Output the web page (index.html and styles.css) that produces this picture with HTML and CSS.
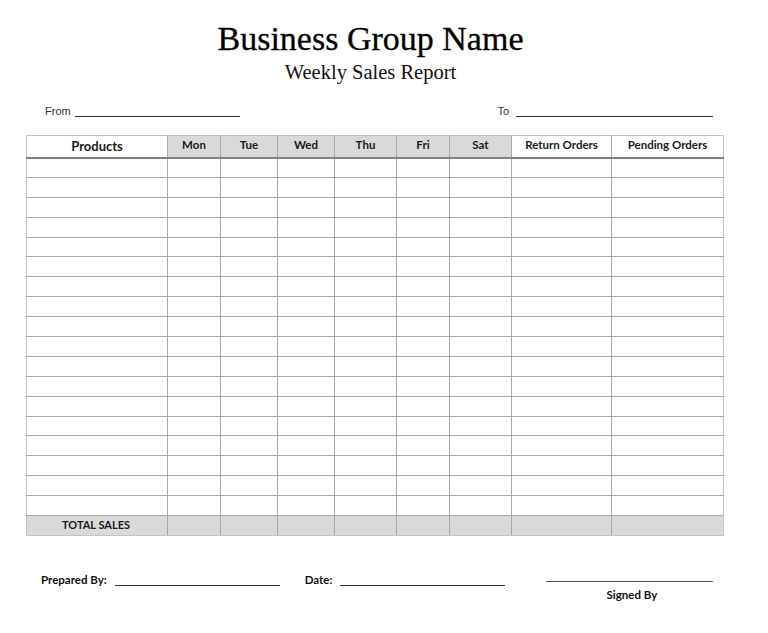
FILE: index.html
```html
<!DOCTYPE html>
<html lang="en">
<head>
<meta charset="utf-8">
<title>Weekly Sales Report</title>
<link rel="stylesheet" href="styles.css">
</head>
<body>
<div class="page">
  <header class="head">
    <h1 class="title">Business Group Name</h1>
    <p class="subtitle">Weekly Sales Report</p>
  </header>
  <div class="range">
    <div class="field"><span class="label">From</span><span class="blank blank-from"></span></div>
    <div class="field"><span class="label label-to">To</span><span class="blank blank-to"></span></div>
  </div>
  <table class="sheet">
    <colgroup>
      <col class="c-prod"><col class="c-mon"><col class="c-tue"><col class="c-wed"><col class="c-thu"><col class="c-fri"><col class="c-sat"><col class="c-ret"><col class="c-pend">
    </colgroup>
    <thead>
      <tr>
        <th class="h-prod">Products</th>
        <th class="h-day">Mon</th>
        <th class="h-day">Tue</th>
        <th class="h-day">Wed</th>
        <th class="h-day">Thu</th>
        <th class="h-day">Fri</th>
        <th class="h-day">Sat</th>
        <th>Return Orders</th>
        <th>Pending Orders</th>
      </tr>
    </thead>
    <tbody>
      <tr><td></td><td></td><td></td><td></td><td></td><td></td><td></td><td></td><td></td></tr>
      <tr><td></td><td></td><td></td><td></td><td></td><td></td><td></td><td></td><td></td></tr>
      <tr><td></td><td></td><td></td><td></td><td></td><td></td><td></td><td></td><td></td></tr>
      <tr><td></td><td></td><td></td><td></td><td></td><td></td><td></td><td></td><td></td></tr>
      <tr><td></td><td></td><td></td><td></td><td></td><td></td><td></td><td></td><td></td></tr>
      <tr><td></td><td></td><td></td><td></td><td></td><td></td><td></td><td></td><td></td></tr>
      <tr><td></td><td></td><td></td><td></td><td></td><td></td><td></td><td></td><td></td></tr>
      <tr><td></td><td></td><td></td><td></td><td></td><td></td><td></td><td></td><td></td></tr>
      <tr><td></td><td></td><td></td><td></td><td></td><td></td><td></td><td></td><td></td></tr>
      <tr><td></td><td></td><td></td><td></td><td></td><td></td><td></td><td></td><td></td></tr>
      <tr><td></td><td></td><td></td><td></td><td></td><td></td><td></td><td></td><td></td></tr>
      <tr><td></td><td></td><td></td><td></td><td></td><td></td><td></td><td></td><td></td></tr>
      <tr><td></td><td></td><td></td><td></td><td></td><td></td><td></td><td></td><td></td></tr>
      <tr><td></td><td></td><td></td><td></td><td></td><td></td><td></td><td></td><td></td></tr>
      <tr><td></td><td></td><td></td><td></td><td></td><td></td><td></td><td></td><td></td></tr>
      <tr><td></td><td></td><td></td><td></td><td></td><td></td><td></td><td></td><td></td></tr>
      <tr><td></td><td></td><td></td><td></td><td></td><td></td><td></td><td></td><td></td></tr>
      <tr><td></td><td></td><td></td><td></td><td></td><td></td><td></td><td></td><td></td></tr>
    </tbody>
    <tfoot>
      <tr class="total"><th>TOTAL SALES</th><td></td><td></td><td></td><td></td><td></td><td></td><td></td><td></td></tr>
    </tfoot>
  </table>
  <footer class="sign">
    <div class="field"><span class="label-b">Prepared By:</span><span class="blank blank-prep"></span></div>
    <div class="field"><span class="label-b">Date:</span><span class="blank blank-date"></span></div>
    <div class="signed"><span class="sig-line"></span><span class="label-b">Signed By</span></div>
  </footer>
</div>
</body>
</html>
```

FILE: styles.css
```css
* { box-sizing: border-box; }
html, body { margin: 0; padding: 0; background: #fff; }
body {
  width: 768px;
  height: 633px;
  font-family: "Lato", "Open Sans", sans-serif;
  color: #1a1a1a;
}
.page {
  padding: 18px 45px 0 26px;
}
.head {
  text-align: center;
  padding-right: 8px;
}
.title {
  margin: 0;
  font-family: "Liberation Serif", "DejaVu Serif", serif;
  font-weight: normal;
  font-size: 34px;
  line-height: 42px;
  color: #000;
  -webkit-text-stroke: 0.3px #000;
}
.subtitle {
  margin: 0;
  font-family: "Liberation Serif", "DejaVu Serif", serif;
  font-size: 20.5px;
  line-height: 24px;
  color: #111;
}
.range {
  display: flex;
  justify-content: space-between;
  align-items: flex-start;
  padding: 21px 10px 0 19px;
  height: 51px;
}
.field {
  display: flex;
  align-items: flex-end;
}
.label {
  font-family: "Liberation Sans", "Arial", sans-serif;
  font-size: 11px;
  line-height: 13px;
  margin-right: 4px;
  color: #333;
}
.label-to { margin-right: 7px; }
.blank {
  display: block;
  border-bottom: 1px solid #333;
  height: 1px;
  margin-bottom: 1px;
}
.blank-from { width: 165px; }
.blank-to { width: 197px; }

.sheet {
  border-collapse: collapse;
  table-layout: fixed;
  width: 697px;
  border: 1px solid #c4c4c4;
}
.c-prod { width: 141px; }
.c-mon { width: 53px; }
.c-tue { width: 57px; }
.c-wed { width: 57px; }
.c-thu { width: 62px; }
.c-fri { width: 53px; }
.c-sat { width: 62px; }
.c-ret { width: 100px; }
.c-pend { width: 112px; }

.sheet th, .sheet td {
  border: 1px solid #a8a8a8;
  padding: 0;
}
.sheet thead th {
  height: 22px;
  font-size: 11.5px;
  font-weight: bold;
  color: #1a1a1a;
  text-align: center;
  vertical-align: middle;
  padding-bottom: 3px;
  border-top-color: #c4c4c4;
  border-bottom: 2px solid #808080;
}
.sheet thead th:first-child { border-left-color: #c4c4c4; }
.sheet thead th:last-child { border-right-color: #c4c4c4; }
.sheet thead .h-prod { font-size: 13px; padding-bottom: 1px; }
.sheet thead .h-day { background: #d9d9d9; }
.sheet tbody td { height: 19.9px; }
.sheet tbody td:first-child { border-left-color: #c4c4c4; }
.sheet tbody td:last-child { border-right-color: #c4c4c4; }
.total th, .total td {
  background: #d9d9d9;
  height: 20px;
  border-bottom-color: #c4c4c4;
}
.total th {
  font-size: 11px;
  font-weight: bold;
  text-align: center;
  padding-right: 2px;
  padding-bottom: 3px;
  border-left-color: #c4c4c4;
}
.total td:last-child { border-right-color: #c4c4c4; }

.sign {
  display: flex;
  align-items: flex-start;
  padding: 37px 0 0 15px;
}
.label-b {
  font-size: 11.5px;
  font-weight: bold;
  line-height: 14px;
  color: #111;
  margin-right: 8px;
}
.blank-prep { width: 165px; margin-right: 25px; }
.blank-date { width: 165px; margin-right: 41px; }
.signed {
  display: flex;
  flex-direction: column;
  align-items: center;
  width: 167px;
  padding-top: 8px;
}
.sig-line {
  display: block;
  width: 167px;
  border-bottom: 1px solid #555;
  margin-bottom: 6px;
}
.signed .label-b { margin-right: 0; padding-left: 4px; }
```
